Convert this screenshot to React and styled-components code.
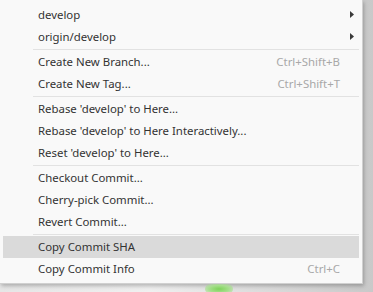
import React from 'react';
import styled, { createGlobalStyle } from 'styled-components';

const Global = createGlobalStyle`
  html, body {
    margin: 0;
    padding: 0;
    width: 373px;
    height: 292px;
    overflow: hidden;
    background: #d9d9d9;
  }
`;

const Page = styled.div`
  position: relative;
  width: 373px;
  height: 292px;
  background: linear-gradient(to right, #e6e6e6 0%, #f0f0f0 40%, #dcdcdc 70%, #c9c9c9 100%);
  font-family: 'Segoe UI', 'Noto Sans', 'Open Sans', sans-serif;
`;

const Blob = styled.div`
  position: absolute;
  left: 205px;
  top: 284px;
  width: 28px;
  height: 10px;
  border-radius: 6px;
  background: radial-gradient(ellipse at center, #7ed35a 0%, #a6df8c 50%, rgba(220, 235, 215, 0) 100%);
`;

const Menu = styled.div`
  position: relative;
  width: 363px;
  background: #f9f9f9;
  border: 1px solid #d0d0d0;
  border-top: none;
  border-left: none;
  box-shadow: 1px 2px 4px rgba(0, 0, 0, 0.25);
  padding: 4px 3px 3px 3px;
  box-sizing: border-box;
`;

const Item = styled.div`
  display: flex;
  align-items: center;
  box-sizing: border-box;
  height: 22px;
  padding: 0 0 1px 35px;
  font-size: 11.4px;
  color: #333333;
  background: ${(p) => (p.$active ? '#dadada' : 'transparent')};
`;

const Label = styled.span`
  flex: 1;
  white-space: nowrap;
`;

const Shortcut = styled.span`
  color: #a8a8a8;
  width: 92px;
  margin-right: 19px;
  text-align: right;
`;

const Arrow = styled.span`
  width: 9px;
  display: flex;
  justify-content: flex-start;
`;

const Sep = styled.div`
  height: 1px;
  margin: 1px 0 1px 30px;
  background: #e2e2e2;
`;

const Caret = () => (
  <svg width="4" height="7" viewBox="0 0 4 7">
    <path d="M0 0 L4 3.5 L0 7 Z" fill="#3a3a3a" />
  </svg>
);

const groups = [
  [
    { label: 'develop', sub: true },
    { label: 'origin/develop', sub: true },
  ],
  [
    { label: 'Create New Branch...', key: 'Ctrl+Shift+B' },
    { label: 'Create New Tag...', key: 'Ctrl+Shift+T' },
  ],
  [
    { label: "Rebase 'develop' to Here..." },
    { label: "Rebase 'develop' to Here Interactively..." },
    { label: "Reset 'develop' to Here..." },
  ],
  [
    { label: 'Checkout Commit...' },
    { label: 'Cherry-pick Commit...' },
    { label: 'Revert Commit...' },
  ],
  [
    { label: 'Copy Commit SHA', active: true },
    { label: 'Copy Commit Info', key: 'Ctrl+C' },
  ],
];

export default function App() {
  return (
    <Page>
      <Global />
      <Menu>
        {groups.map((g, gi) => (
          <React.Fragment key={gi}>
            {gi > 0 && <Sep />}
            {g.map((it) => (
              <Item key={it.label} $active={it.active}>
                <Label>{it.label}</Label>
                {it.key && <Shortcut>{it.key}</Shortcut>}
                {it.sub && (
                  <Arrow>
                    <Caret />
                  </Arrow>
                )}
              </Item>
            ))}
          </React.Fragment>
        ))}
      </Menu>
      <Blob />
    </Page>
  );
}
